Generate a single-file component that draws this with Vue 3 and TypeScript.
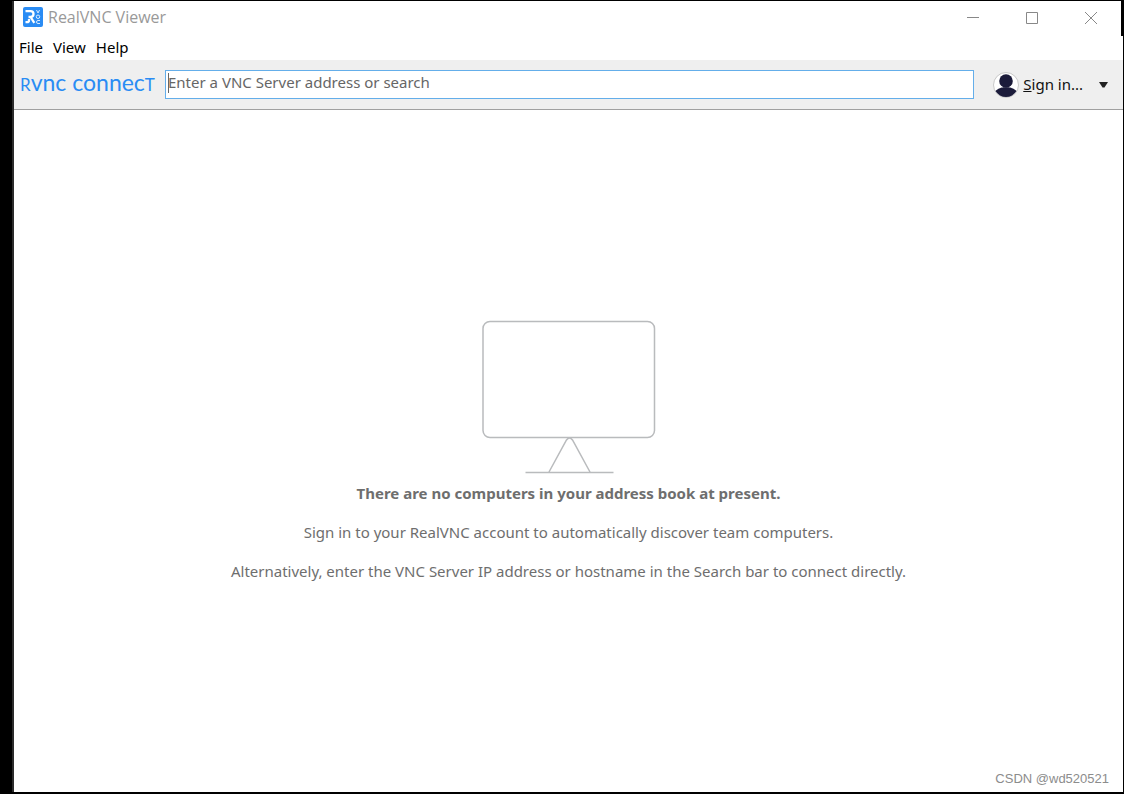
<script setup lang="ts">
import { onMounted, ref } from 'vue'

const menus: string[] = ['File', 'View', 'Help']
const hints: string[] = [
  'Sign in to your RealVNC account to automatically discover team computers.',
  'Alternatively, enter the VNC Server IP address or hostname in the Search bar to connect directly.',
]
const query = ref('')
const searchBox = ref<HTMLInputElement | null>(null)

onMounted(() => searchBox.value?.focus())
</script>

<template>
  <div class="desktop">
    <div class="window">
      <header class="titlebar">
        <svg class="app-icon" viewBox="0 0 20 20" aria-hidden="true">
          <rect width="20" height="20" rx="2" fill="#2a8cf4" />
          <path d="M2.500 4.200H7.600A2.900 2.900 0 0 1 7.600 10H5.500M7.600 10L11.300 15.800M2.500 15.200H4Q6 15.200 6 13.200V12" fill="none" stroke="#fff" stroke-width="2.300" />
          <path d="M13.500 3l1.500 3 1.500-3M15 8a1.500 1.500 0 0 1 0 3.500a1.500 1.500 0 0 1 0-3.500M17 13.500h-2q-1.500 0-1.500 1.500t1.500 1.500h2" fill="none" stroke="#d5e9ff" stroke-width="1" />
        </svg>
        <h1 class="title">RealVNC Viewer</h1>
        <div class="controls">
          <button type="button" class="control" aria-label="Minimize">
            <svg viewBox="0 0 14 14"><path d="M1 7.500h12" /></svg>
          </button>
          <button type="button" class="control" aria-label="Maximize">
            <svg viewBox="0 0 14 14"><path d="M1.500 2.500h11v11h-11z" /></svg>
          </button>
          <button type="button" class="control" aria-label="Close">
            <svg viewBox="0 0 14 14"><path d="M1 2l12 12M13 2L1 14" /></svg>
          </button>
        </div>
      </header>

      <div class="body">
        <nav class="menubar">
          <button v-for="menu in menus" :key="menu" type="button" class="menu">{{ menu }}</button>
        </nav>

        <div class="toolbar">
          <div class="brand"><span class="cap">R</span>vnc connec<span class="cap">T</span></div>
          <input
            ref="searchBox"
            v-model="query"
            class="search"
            type="text"
            aria-label="Enter a VNC Server address or search"
            placeholder="Enter a VNC Server address or search"
          />
          <button type="button" class="account">
            <svg class="avatar" viewBox="0 0 26 26" aria-hidden="true">
              <circle cx="13" cy="13" r="12.500" fill="#fff" stroke="#c8c8c8" />
              <circle cx="13" cy="9" r="6.800" fill="#1b1b3a" />
              <path d="M2.500 19C5.500 16 9 15.500 10 15.200h6C17 15.500 20.500 16 23.500 19A12.200 12.200 0 0 1 2.500 19z" fill="#1b1b3a" />
            </svg>
            <span class="account-label"><u>S</u>ign in...</span>
            <svg class="caret" viewBox="0 0 9 6" aria-hidden="true"><path d="M0 0h9L5.500 5.500h-2z" fill="#222" /></svg>
          </button>
        </div>

        <main class="empty">
          <svg class="monitor" viewBox="0 0 174 154" aria-hidden="true">
            <rect x="1" y="1.500" width="171.500" height="116" rx="7" />
            <path d="M43.500 152.500H131.500M67 152L84.500 120Q86 118 87.500 118Q89 118 90.500 120L108 152" />
          </svg>
          <h2 class="headline">There are no computers in your address book at present.</h2>
          <p v-for="hint in hints" :key="hint" class="hint">{{ hint }}</p>
          <span class="watermark">CSDN @wd520521</span>
        </main>
      </div>
    </div>
  </div>
</template>

<style>
body {
  margin: 0;
}
</style>

<style scoped>
.desktop {
  box-sizing: border-box;
  min-height: 100vh;
  display: flex;
  padding: 1px 1px 2px 12px;
  background: #000;
  font-family: "Noto Sans", "Open Sans", sans-serif;
  font-size: 15px;
  color: #111;
}
.window {
  flex: 1;
  display: flex;
  flex-direction: column;
  border-left: 2px solid #2b2b2b;
}
button {
  padding: 0;
  border: 0;
  background: none;
  font: inherit;
  color: inherit;
}
.titlebar {
  display: flex;
  align-items: center;
  box-sizing: border-box;
  height: 35px;
  margin-right: 2px;
  padding: 0 1px 3px 9px;
  background: #fff;
}
.app-icon {
  width: 20px;
  height: 20px;
}
.title {
  margin: 0 0 0 5px;
  font-family: "Open Sans", "Noto Sans", sans-serif;
  font-size: 16px;
  font-weight: 400;
  line-height: 32px;
  color: #999;
}
.controls {
  display: flex;
  margin-left: auto;
}
.control {
  display: flex;
  align-items: center;
  justify-content: center;
  width: 59px;
  height: 32px;
}
.control svg {
  width: 14px;
  height: 14px;
  fill: none;
  stroke: #888;
}
.body {
  flex: 1;
  display: flex;
  flex-direction: column;
  background: #fff;
}
.menubar {
  display: flex;
  gap: 10px;
  box-sizing: border-box;
  height: 24px;
  padding: 0 0 2px 5px;
  color: #000;
}
.toolbar {
  display: flex;
  align-items: center;
  height: 49px;
  padding: 0 15px 0 6px;
  background: #efefef;
  border-bottom: 1px solid #a0a0a0;
}
.brand {
  width: 145px;
  padding-bottom: 2px;
  font-family: Lato, sans-serif;
  font-size: 23px;
  line-height: 30px;
  white-space: nowrap;
  color: #2a8cf4;
}
.cap {
  font-size: 17px;
}
.search {
  flex: 1;
  box-sizing: border-box;
  min-width: 0;
  height: 29px;
  padding: 0 2px 6px;
  border: 1px solid #64aeea;
  border-radius: 0;
  outline: 0;
  background: linear-gradient(#666, #666) 2px 2px / 1px 20px no-repeat #fff;
  caret-color: transparent;
  font: inherit;
  color: #111;
}
.search::placeholder {
  color: #666;
  opacity: 1;
}
.account {
  display: flex;
  align-items: center;
  margin-left: 19px;
}
.account-label {
  padding-bottom: 2px;
}
.avatar {
  width: 26px;
  height: 26px;
  margin-right: 4px;
}
.caret {
  width: 9px;
  height: 6px;
  margin-left: 16px;
}
.empty {
  position: relative;
  flex: 1;
  display: flex;
  flex-direction: column;
  align-items: center;
  justify-content: center;
  gap: 17px;
  padding-bottom: 1px;
  color: #6e6e6e;
  text-align: center;
}
.monitor {
  width: 174px;
  height: 154px;
  margin-bottom: -9px;
  fill: none;
  stroke: #b9bbbd;
  stroke-width: 1.5;
}
.headline,
.hint {
  margin: 0;
  font-size: 15px;
  line-height: 22px;
}
.watermark {
  position: absolute;
  right: 14px;
  bottom: 5px;
  font-family: "Liberation Sans", Arial, sans-serif;
  font-size: 13px;
  line-height: 16px;
  color: #8c8c8c;
}
</style>
